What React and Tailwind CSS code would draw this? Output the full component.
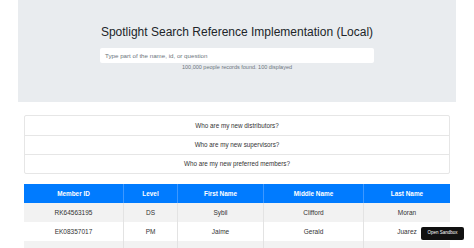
export default function App() {
  const rows = [
    ["RK64563195", "DS", "Sybil", "Clifford", "Moran"],
    ["EK08357017", "PM", "Jaime", "Gerald", "Juarez"],
    ["", "", "", "", ""],
  ];
  const widths = ["w-[99px]", "w-[54px]", "w-[86px]", "w-[100px]", "w-[87px]"];
  const heads = ["Member ID", "Level", "First Name", "Middle Name", "Last Name"];
  return (
    <div className="relative w-[474px] h-[248px] overflow-hidden bg-white font-['Liberation_Sans',Arial,sans-serif]">
      <div className="mx-[18px] h-[102px] bg-[#e9ecef] flex flex-col items-center pt-[24px]">
        <div className="text-[12px] leading-[16px] text-[#212529]">Spotlight Search Reference Implementation (Local)</div>
        <div className="mt-[8px] w-[274px] h-[15px] bg-white rounded-[2px] flex items-center px-[5px] text-[6.2px] text-[#6c757d]">
          Type part of the name, id, or question
        </div>
        <div className="mt-[1px] text-[5.5px] leading-[7px] text-[#6c757d]">100,000 people records found. 100 displayed</div>
      </div>
      <div className="mx-[24px] mt-[13px] border border-[#e6e6e6] rounded-[2px]">
        {["Who are my new distributors?", "Who are my new supervisors?", "Who are my new preferred members?"].map((q, i) => (
          <div key={i} className={`h-[19px] flex items-center justify-center text-[6.3px] text-[#333] ${i > 0 ? "border-t border-[#e6e6e6]" : ""}`}>
            {q}
          </div>
        ))}
      </div>
      <div className="mx-[24px] mt-[10px]">
        <div className="flex h-[19px] bg-[#007bff] text-white font-bold text-[6.4px]">
          {heads.map((h, i) => (
            <div key={i} className={`${widths[i]} flex items-center justify-center ${i > 0 ? "border-l border-[#3d98ff]" : ""}`}>{h}</div>
          ))}
        </div>
        {rows.map((r, ri) => (
          <div key={ri} className={`flex h-[19px] text-[6.5px] text-[#333] ${ri % 2 === 0 ? "bg-[#f2f2f2]" : "bg-white"}`}>
            {r.map((c, i) => (
              <div key={i} className={`${widths[i]} flex items-center justify-center ${i > 0 ? "border-l border-[#e3e3e3]" : ""}`}>{c}</div>
            ))}
          </div>
        ))}
      </div>
      <div className="absolute left-[421px] top-[227px] w-[43px] h-[13px] bg-[#111] rounded-[2px] text-white text-[4.5px] flex items-center justify-center">
        Open Sandbox
      </div>
    </div>
  );
}
